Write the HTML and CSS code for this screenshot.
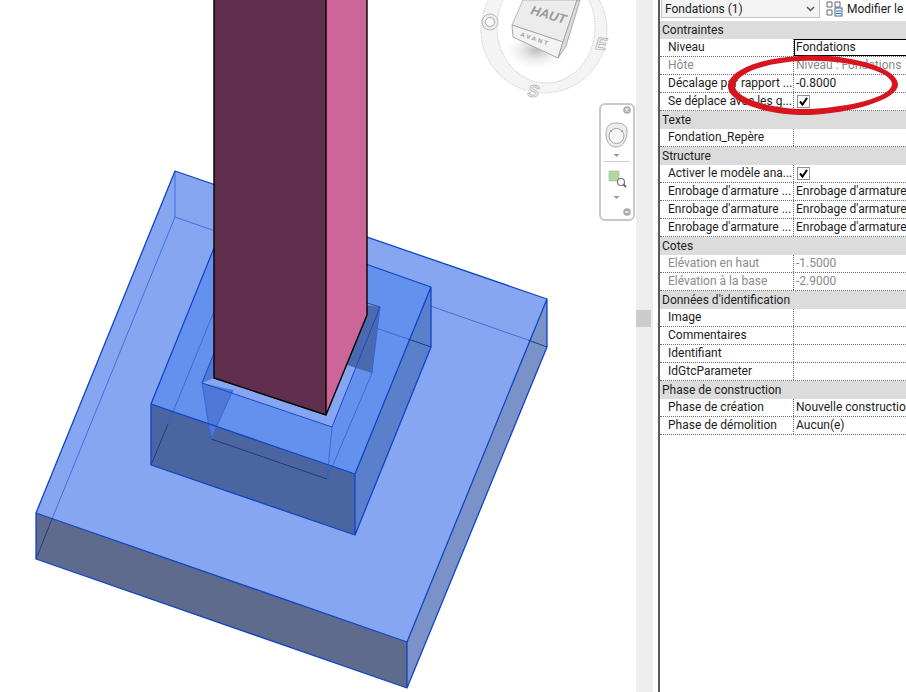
FILE: index.html
```html
<!DOCTYPE html>
<html lang="fr">
<head>
<meta charset="utf-8">
<title>Fondations</title>
<link rel="stylesheet" href="styles.css">
</head>
<body>
<div class="app">
  <main class="viewport">
    <svg class="scene" viewBox="0 0 636 692" width="636" height="692">
      <!-- semelle -->
      <polygon class="slab-top" points="175,171 547,299 407,642 36,513"/>
      <polygon class="slab-left" points="36,513 407,642 407,688 36,559"/>
      <polygon class="slab-right" points="407,642 547,299 547,347 407,688"/>
      <path class="hid-light" d="M175,171V217L52,519M175,217L528,340"/>
      <path class="hid-dark" d="M52,519L36,559M528,340L547,347"/>
      <!-- fût -->
      <polygon class="block-top" points="151,404 355,474 431,287 228,216"/>
      <polygon class="block-left" points="151,404 355,474 355,535 151,465"/>
      <polygon class="block-right" points="355,474 431,287 431,347 355,535"/>
      <path class="hid-light" d="M228,277L168,424M228,277L408,339"/>
      <path class="hid-dark" d="M168,424L151,465M408,339L431,347"/>
      <!-- réservation -->
      <polygon class="hole" points="202,383 332,427 380,307 250,262"/>
      <polygon class="wedge-left" points="202,383 233,390 212,438 208,423"/>
      <polygon class="wedge-left" points="214,353 202,383 214,378"/>
      <polygon class="wedge-right" points="380,307 372,373 347,365 367,305"/>
      <path class="hid-light" d="M202,383L211,439L233,390M332,427L327,479L372,373L380,307"/>
      <path class="hid-dark" d="M211,439L327,479"/>
      <path class="edge-thin" d="M202,383L332,427L380,307L367,303M202,383L214,353"/>
      <!-- arêtes -->
      <path class="edge" d="M175,171L547,299L407,642L36,513ZM36,513V559L407,688V642M407,688L547,347V299"/>
      <path class="edge" d="M214,248L151,404L355,474L431,287L360,262M151,404V465L355,535V474M355,535L431,347V287"/>
      <!-- poteau -->
      <polygon class="col-dark" points="214,0 326,0 326,415 214,378"/>
      <polygon class="col-pink" points="326,0 367,0 367,315 326,415"/>
      <path class="col-edge" d="M214,0V378L326,415L367,315V0M326,0V415"/>
    </svg>

    <svg class="navcube" viewBox="0 0 140 110" width="140" height="110">
      <defs>
        <radialGradient id="cube-shadow">
          <stop offset="0" stop-color="#bdbdbd"/>
          <stop offset="1" stop-color="#ffffff" stop-opacity="0"/>
        </radialGradient>
      </defs>
      <path class="ring" d="M11,30A63,63 0 1 0 137,30A63,63 0 1 0 11,30ZM27,27A49,56 0 1 0 125,27A49,56 0 1 0 27,27Z"/>
      <ellipse cx="66" cy="50" rx="34" ry="22" fill="url(#cube-shadow)"/>
      <polygon class="cube-top" points="42,25 53,0 107,0 93,42"/>
      <polygon class="cube-front" points="42,25 93,42 88,58 43,37"/>
      <polygon class="cube-side" points="93,42 107,0 110,0 96,46 88,58"/>
      <text class="cube-haut" transform="translate(60,14) rotate(16)">HAUT</text>
      <text class="cube-avant" transform="translate(50,36) rotate(19)">AVANT</text>
      <circle class="cube-pin" cx="20" cy="22" r="8"/>
      <circle class="cube-pin-in" cx="20" cy="22" r="4.500"/>
      <text class="cube-dir" transform="translate(125,49) rotate(6)">E</text>
      <text class="cube-dir" transform="translate(57,96) rotate(8)">S</text>
    </svg>

    <svg class="navbar" viewBox="0 0 36 118" width="36" height="118">
      <rect class="nb-frame" x="1" y="1" width="34" height="116" rx="5"/>
      <circle class="nb-btn" cx="28" cy="7" r="3.800"/>
      <path class="nb-x" d="M26.500,5.500L29.500,8.500M29.500,5.500L26.500,8.500"/>
      <path class="nb-wheel" d="M17,20C25,20 28,23 28,29C28,37 24,44 17,44C11,44 7,39 7,31C7,24 10,20 17,20Z"/>
      <circle class="nb-wheel-in" cx="17.500" cy="33" r="7.500"/>
      <path class="nb-wheel-in" d="M11,27L13,29M24,27L22,29"/>
      <polygon class="nb-arrow" points="14.500,51 20.500,51 17.500,54"/>
      <rect class="nb-sep" x="5" y="58" width="26" height="1"/>
      <rect class="nb-zoom" x="10" y="68" width="10" height="10"/>
      <circle class="nb-lens" cx="22" cy="79" r="3.500"/>
      <path class="nb-handle" d="M24.500,81.500L27,84"/>
      <polygon class="nb-arrow" points="14.500,93 20.500,93 17.500,96"/>
      <circle class="nb-btn" cx="28" cy="109" r="3.800"/>
      <path class="nb-x" d="M26,109H30"/>
    </svg>
  </main>

  <div class="scroller"><div class="thumb"></div></div>

  <aside class="panel">
    <div class="topbar">
      <div class="selector"><span>Fondations (1)</span>
        <svg class="chevron" viewBox="0 0 9 6" width="9" height="6"><path d="M1,1L4.500,4.500L8,1"/></svg>
      </div>
      <svg class="type-icon" viewBox="0 0 17 16" width="17" height="16">
        <path class="ti-g" d="M1,1H6V6H1ZM1,9H6V14H1ZM9,1H14V6H9Z"/>
        <rect class="ti-b" x="9" y="7" width="7" height="8"/>
        <path class="ti-b" d="M10,10H15M10,12.500H15"/>
      </svg>
      <span class="edit">Modifier le</span>
    </div>

    <div class="section">Contraintes</div>
    <div class="row"><div class="k">Niveau</div><div class="v active">Fondations</div></div>
    <div class="row off"><div class="k">Hôte</div><div class="v">Niveau : Fondations</div></div>
    <div class="row"><div class="k">Décalage par rapport ...</div><div class="v">-0.8000</div></div>
    <div class="row"><div class="k">Se déplace avec les g...</div><div class="v"><span class="check"><svg viewBox="0 0 11 11" width="11" height="11"><path d="M2,5.500L4.500,8.500L9,2"/></svg></span></div></div>

    <div class="section">Texte</div>
    <div class="row"><div class="k">Fondation_Repère</div><div class="v"></div></div>

    <div class="section">Structure</div>
    <div class="row"><div class="k">Activer le modèle ana...</div><div class="v"><span class="check"><svg viewBox="0 0 11 11" width="11" height="11"><path d="M2,5.500L4.500,8.500L9,2"/></svg></span></div></div>
    <div class="row"><div class="k">Enrobage d'armature ...</div><div class="v">Enrobage d'armature</div></div>
    <div class="row"><div class="k">Enrobage d'armature ...</div><div class="v">Enrobage d'armature</div></div>
    <div class="row"><div class="k">Enrobage d'armature ...</div><div class="v">Enrobage d'armature</div></div>

    <div class="section">Cotes</div>
    <div class="row off"><div class="k">Elévation en haut</div><div class="v">-1.5000</div></div>
    <div class="row off"><div class="k">Elévation à la base</div><div class="v">-2.9000</div></div>

    <div class="section">Données d'identification</div>
    <div class="row"><div class="k">Image</div><div class="v"></div></div>
    <div class="row"><div class="k">Commentaires</div><div class="v"></div></div>
    <div class="row"><div class="k">Identifiant</div><div class="v"></div></div>
    <div class="row"><div class="k">IdGtcParameter</div><div class="v"></div></div>

    <div class="section">Phase de construction</div>
    <div class="row"><div class="k">Phase de création</div><div class="v">Nouvelle construction</div></div>
    <div class="row"><div class="k">Phase de démolition</div><div class="v">Aucun(e)</div></div>
  </aside>

  <svg class="annotation" viewBox="725 50 180 70" width="180" height="70">
    <path fill-rule="evenodd" d="M800,56C850,53 897,68 898,84C899,100 850,113 810,115C770,116 727,103 728,86C729,70 760,58 800,56ZM800,61C850,59 892,72 892,84C892,97 850,107 810,109C772,110 735,98 735,86C736,73 765,63 800,61Z"/>
  </svg>
</div>
</body>
</html>
```

FILE: styles.css
```css
* { box-sizing: border-box; }
html, body { margin: 0; padding: 0; background: #fff; }
body { width: 906px; height: 692px; overflow: hidden; }

.app {
  position: relative;
  display: flex;
  width: 906px;
  height: 692px;
  overflow: hidden;
  font-family: Roboto, "Noto Sans", sans-serif;
  font-size: 12px;
  color: #1c1c1c;
}

/* 3D view */
.viewport { position: relative; flex: 0 0 636px; height: 692px; }
.scene { display: block; }
.slab-top { fill: #86a6f1; }
.slab-left { fill: #5f6b8d; }
.slab-right { fill: #7a92c8; }
.block-top { fill: #6490ee; }
.block-left { fill: #4a659f; }
.block-right { fill: #5a80cc; }
.hole { fill: #86a6f1; }
.wedge-left { fill: #4f79d8; }
.wedge-right { fill: #4a69ae; }
.edge { fill: none; stroke: #0f45c4; stroke-width: 1.300; stroke-linejoin: round; }
.edge-thin { fill: none; stroke: #1a4cc0; stroke-width: 1; }
.hid-light { fill: none; stroke: #2f62d6; stroke-width: 1; opacity: .8; }
.hid-dark { fill: none; stroke: #1f3b80; stroke-width: 1; }
.col-dark { fill: #5f2f4d; }
.col-pink { fill: #cc6699; }
.col-edge { fill: none; stroke: #000; stroke-width: 1.400; stroke-linejoin: round; }

/* ViewCube */
.navcube { position: absolute; left: 470px; top: 0; }
.ring { fill: #f4f4f4; fill-rule: evenodd; stroke: #cfcfcf; stroke-width: 1; stroke-dasharray: 1.500 1; }
.cube-top { fill: #ececec; stroke: #aaa; stroke-width: .8; }
.cube-front { fill: #f3f3f3; stroke: #999; stroke-width: .8; }
.cube-side { fill: #dcdcdc; stroke: #999; stroke-width: .8; }
.cube-haut { font: italic 700 13px "Liberation Sans", sans-serif; fill: #9a9a9a; }
.cube-avant { font: 700 6px "Liberation Sans", sans-serif; letter-spacing: 2.200px; fill: #999; }
.cube-pin { fill: #ececec; stroke: #bbb; }
.cube-pin-in { fill: #fafafa; stroke: #aaa; }
.cube-dir { font: italic 700 17px "Liberation Sans", sans-serif; fill: #efefef; stroke: #b0b0b0; stroke-width: .7; }

/* Navigation bar */
.navbar { position: absolute; left: 599px; top: 103px; }
.nb-frame { fill: #fff; stroke: #c8c8c8; stroke-width: 2; }
.nb-btn { fill: #ababab; }
.nb-x { fill: none; stroke: #fff; stroke-width: 1.200; }
.nb-wheel { fill: #ededed; stroke: #aaa; }
.nb-wheel-in { fill: #f6f6f6; stroke: #a0a0a0; }
.nb-arrow { fill: #999; }
.nb-sep { fill: #cfcfcf; }
.nb-zoom { fill: #b6d6a0; stroke: #9ab98a; stroke-width: .6; }
.nb-lens { fill: #fff; stroke: #777; stroke-width: 1.200; }
.nb-handle { stroke: #666; stroke-width: 1.800; }

/* Scrollbar */
.scroller { flex: 0 0 17px; height: 692px; background: #eeeeee; padding-top: 310px; }
.thumb { width: 15px; height: 17px; background: #cccccc; }

/* Properties panel */
.panel {
  margin-left: 5px;
  flex: 0 0 248px;
  height: 692px;
  border-left: 2px solid #5a5a5a;
  overflow: hidden;
  background: #fff;
}
.topbar { display: flex; align-items: center; height: 21px; padding-bottom: 3px; }
.selector {
  display: flex;
  align-items: center;
  justify-content: space-between;
  width: 159px;
  height: 18px;
  margin-left: 1px;
  padding: 0 4px 0 3px;
  border: 1px solid #c4c4c4;
  border-top: 0;
  background: #f3f3f3;
}
.chevron { fill: none; stroke: #555; stroke-width: 1.500; }
.type-icon { margin-left: 6px; flex: none; }
.ti-g { fill: #fff; stroke: #666; stroke-width: 1; }
.ti-b { fill: #fff; stroke: #2d6aa0; stroke-width: 1; }
.edit { margin-left: 4px; white-space: nowrap; }

.section {
  height: 18px;
  line-height: 18px;
  padding-left: 2px;
  background: #dcdcdc;
}
.row {
  display: grid;
  grid-template-columns: 134px 1fr;
  height: 18px;
  line-height: 16px;
  border-bottom: 1px dotted #6e6e6e;
}
.k {
  padding-left: 8px;
  border-right: 1px dotted #6e6e6e;
  white-space: nowrap;
  overflow: hidden;
}
.v { padding-left: 2px; white-space: nowrap; overflow: hidden; }
.off { color: #8a8a8a; }
.active { border: 1px solid #000; border-right: 0; line-height: 15px; padding-left: 1px; }
.check {
  display: block;
  width: 13px;
  height: 13px;
  margin: 2px 0 0 1px;
  border: 1px solid #8f8f8f;
  background: #fff;
}
.check svg { display: block; fill: none; stroke: #000; stroke-width: 2; }

/* Red hand-drawn annotation */
.annotation { position: absolute; left: 725px; top: 50px; pointer-events: none; }
.annotation path { fill: #d8141f; }
```
